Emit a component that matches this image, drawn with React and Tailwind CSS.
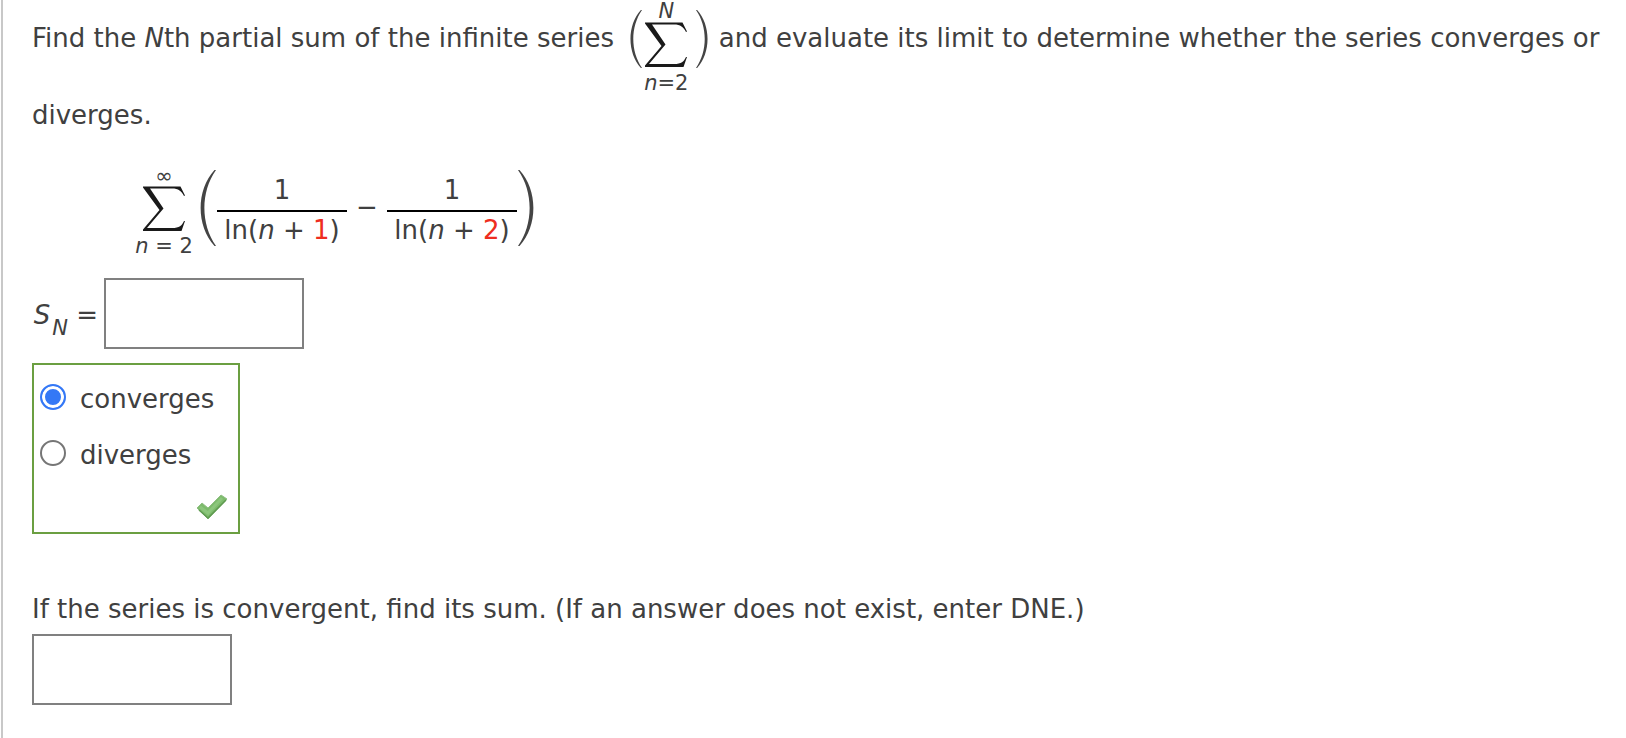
import React, { useState } from "react";

const choices = ["converges", "diverges"];

function Sigma() {
  return (
    <svg width="42" height="46" viewBox="0 0 42 46" className="block shrink-0" aria-hidden="true">
      <path
        d="M0 0.5H37.500L42 9.500L41 10C38.500 5 35.500 2.500 29 2.500H7L20.500 22.500L4 42H29C36.500 42 39 39.500 41 35H42L38.500 45H0V43.500L16.500 24L0 1.500Z"
        fill="#1a1a1a"
      />
    </svg>
  );
}

function Paren({ right, className, ...size }) {
  return (
    <svg
      {...size}
      viewBox="0 0 16 76"
      preserveAspectRatio="none"
      className={className}
      aria-hidden="true"
    >
      <path
        d={right ? "M1.500 0C20 20 20 56 1.500 76H0C15.500 54 15.500 22 0 0Z" : "M14.500 0C-4 20 -4 56 14.500 76H16C0.500 54 0.500 22 16 0Z"}
        fill="#444"
      />
    </svg>
  );
}

function Fraction({ value }) {
  return (
    <div className="flex w-[130px] flex-col items-center leading-8">
      <span>1</span>
      <div className="mt-1 mb-0.5 h-0.5 w-full bg-black" />
      <span className="whitespace-nowrap">
        ln(<i>n</i> + <span className="text-[#ee2d20]">{value}</span>)
      </span>
    </div>
  );
}

function CheckMark() {
  return (
    <svg width="32" height="26" viewBox="0 0 32 26" aria-hidden="true">
      <path d="M1 14L6 9L12 14L25 1L31 5L12 25Z" fill="#7dbb6c" stroke="#8fbf82" strokeWidth="1" strokeLinejoin="round" />
      <path d="M3 16L12 24L30 6" fill="none" stroke="#5f9a51" strokeWidth="1.500" />
      <path d="M4 13L12 19L26 4" fill="none" stroke="#8cc67c" strokeWidth="3" />
    </svg>
  );
}

export default function App() {
  const [choice, setChoice] = useState("converges");

  return (
    <main className="ml-px min-h-screen border-l-2 border-[#c8c8c8] bg-white pr-3 pl-[29px] font-['Verdana','DejaVu_Sans',sans-serif] text-[26px] leading-[38px] text-[#404040]">
      <p>
        Find the <i>N</i>th partial sum of the infinite series{" "}
        <span className="mr-0.5 ml-2 inline-flex h-24 items-start align-[-21px]">
          <Paren width="12" height="58" className="mt-[10px] shrink-0" />
          <span className="mr-2 ml-0.5 flex flex-col items-center text-[21px] leading-[22px]">
            <i>N</i>
            <Sigma />
            <span className="mt-1">
              <i>n</i>=2
            </span>
          </span>
          <Paren right width="12" height="58" className="mt-[10px] shrink-0" />
        </span>{" "}
        and evaluate its limit to determine whether the series converges or diverges.
      </p>

      {/* Series */}
      <div className="mt-8 ml-[102px] flex items-start">
        <div className="flex w-[60px] flex-col items-center text-[21px] leading-5">
          <span>∞</span>
          <Sigma />
          <span className="mt-1 whitespace-nowrap">
            <i>n</i> = 2
          </span>
        </div>
        <Paren width="16" height="76" className="mt-1 ml-1.5 shrink-0" />
        <div className="mx-px mt-2 flex">
          <Fraction value="1" />
          <span className="w-10 text-center leading-[66px]">−</span>
          <Fraction value="2" />
        </div>
        <Paren right width="16" height="76" className="mt-1 shrink-0" />
      </div>

      <div className="mt-[22px] flex items-center">
        <label htmlFor="partial-sum" className="w-[72px] pt-2 pr-1.5 text-right whitespace-nowrap">
          <i>S</i>
          <i className="ml-0.5 align-[-11px] text-[21px] leading-none">N</i> =
        </label>
        <input id="partial-sum" type="text" className="h-[71px] w-[200px] border-2 border-[#808080] px-2" />
      </div>

      {/* Graded choice */}
      <fieldset className="mt-[14px] flex w-[208px] flex-col border-2 border-[#6b9f41] px-1.5 pt-[15px] pb-3">
        {choices.map((name) => (
          <label key={name} className="mb-[18px] flex items-center gap-[14px]">
            <input
              type="radio"
              name="behaviour"
              value={name}
              checked={choice === name}
              onChange={() => setChoice(name)}
              className="mb-1 size-[26px] appearance-none rounded-full border-2 border-[#767676] bg-white checked:border-[#3478f6] checked:bg-[#3478f6] checked:shadow-[inset_0_0_0_3px_white]"
            />
            {name}
          </label>
        ))}
        <div className="mt-0.5 mr-1 flex justify-end">
          <CheckMark />
        </div>
      </fieldset>

      <label htmlFor="sum" className="mt-14 block">
        If the series is convergent, find its sum. (If an answer does not exist, enter DNE.)
      </label>
      <input id="sum" type="text" className="mt-1.5 block h-[71px] w-[200px] border-2 border-[#808080] px-2" />
    </main>
  );
}
